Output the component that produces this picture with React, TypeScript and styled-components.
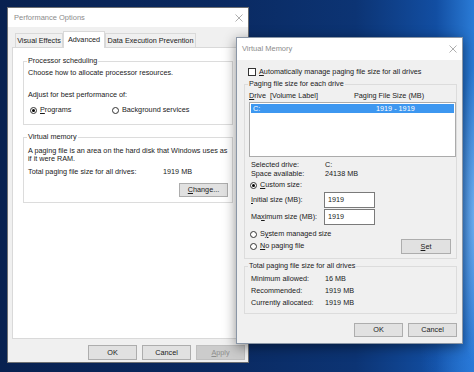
import styled, { createGlobalStyle } from 'styled-components';

const GlobalStyle = createGlobalStyle`
  html, body { margin: 0; padding: 0; }
  body {
    font-family: "Liberation Sans", Arial, sans-serif;
    font-size: 7.25px;
    line-height: 8px;
    color: #1a1a1a;
  }
`;

const Desktop = styled.div`
  position: relative;
  width: 474px;
  height: 372px;
  overflow: hidden;
  background:
    radial-gradient(ellipse 22px 150px at 476px 215px, rgba(140, 200, 255, 0.75), transparent),
    radial-gradient(ellipse 60px 200px at 480px 330px, rgba(40, 120, 220, 0.6), transparent),
    linear-gradient(90deg, #082150 0%, #0a2960 45%, #0c3474 75%, #124ea2 92%, #2a7bd6 100%);
`;

const Window = styled.div<{ $x: number; $y: number; $w: number; $h: number; $active?: boolean }>`
  position: absolute;
  left: ${p => p.$x}px;
  top: ${p => p.$y}px;
  width: ${p => p.$w}px;
  height: ${p => p.$h}px;
  box-sizing: border-box;
  border: 1px solid ${p => (p.$active ? '#8a96a6' : '#6d6f72')};
  background: #f0f0f0;
  display: flex;
  flex-direction: column;
  z-index: ${p => (p.$active ? 2 : 1)};
  box-shadow: ${p => (p.$active ? '0 3px 12px rgba(0, 0, 0, 0.45)' : 'none')};
`;

const TitleBar = styled.div<{ $h: number; $pad: number }>`
  flex: none;
  height: ${p => p.$h}px;
  background: #fff;
  display: flex;
  align-items: center;
  justify-content: space-between;
  padding: 0 5px 0 ${p => p.$pad}px;
  color: #8c8c8c;
  font-size: 7.5px;
`;

const CloseIcon = () => (
  <svg width="8" height="8" viewBox="0 0 8 8">
    <path d="M0.5 0.5 L7.5 7.5 M7.5 0.5 L0.5 7.5" stroke="#9a9a9a" strokeWidth="0.8" />
  </svg>
);

const TabStrip = styled.div`
  flex: none;
  height: 20px;
  display: flex;
  align-items: flex-end;
  padding-left: 7px;
`;

const Tab = styled.div<{ $w: number; $active?: boolean }>`
  position: relative;
  z-index: ${p => (p.$active ? 1 : 0)};
  width: ${p => p.$w}px;
  height: ${p => (p.$active ? 17 : 14)}px;
  margin-bottom: ${p => (p.$active ? -1 : 0)}px;
  box-sizing: border-box;
  border: 1px solid #d9d9d9;
  border-bottom: none;
  background: ${p => (p.$active ? '#fff' : '#f0f0f0')};
  display: flex;
  align-items: center;
  justify-content: center;
  white-space: nowrap;
`;

const Panel = styled.div`
  flex: none;
  height: 292px;
  box-sizing: border-box;
  margin: 0 5px 0 4px;
  padding: 9px 9px 0 10px;
  border: 1px solid #d9d9d9;
  background: #fff;
`;

const Group = styled.fieldset<{ $mt?: number; $pb?: number }>`
  margin: ${p => p.$mt ?? 0}px 0 0 0;
  padding: 0 0 ${p => p.$pb ?? 0}px 4px;
  border: 1px solid #dcdcdc;
  min-width: 0;
  display: flex;
  flex-direction: column;
`;

const Legend = styled.legend`
  padding: 0 1px;
  margin-left: -1px;
  line-height: 8px;
  white-space: nowrap;
`;

const Line = styled.div<{ $mt?: number; $indent?: number }>`
  margin-top: ${p => p.$mt ?? 0}px;
  padding-left: ${p => p.$indent ?? 0}px;
  height: 8px;
  white-space: pre;
`;

const PairGrid = styled.div<{ $col: number; $mt?: number; $gap?: number; $indent?: number }>`
  display: grid;
  grid-template-columns: ${p => p.$col}px auto;
  row-gap: ${p => p.$gap ?? 0}px;
  margin-top: ${p => p.$mt ?? 0}px;
  padding-left: ${p => p.$indent ?? 0}px;
  line-height: 8px;
  white-space: pre;
`;

const RadioRow = styled.div`
  display: grid;
  grid-template-columns: 82px auto;
  margin-top: 7px;
  padding-left: 2px;
`;

const RadioLabel = styled.label<{ $mt?: number; $ml?: number }>`
  display: inline-flex;
  align-items: center;
  gap: 3px;
  height: 8px;
  margin-top: ${p => p.$mt ?? 0}px;
  margin-left: ${p => p.$ml ?? 0}px;
  white-space: nowrap;
`;

const RadioDot = styled.span<{ $checked?: boolean }>`
  width: 7px;
  height: 7px;
  box-sizing: border-box;
  border: 1px solid #333;
  border-radius: 50%;
  background: #fff;
  display: flex;
  align-items: center;
  justify-content: center;
  &::after {
    content: '';
    width: 3px;
    height: 3px;
    border-radius: 50%;
    background: ${p => (p.$checked ? '#000' : 'transparent')};
  }
`;

const Radio = ({ checked, children, mt, ml }: { checked?: boolean; children: React.ReactNode; mt?: number; ml?: number }) => (
  <RadioLabel $mt={mt} $ml={ml}>
    <RadioDot $checked={checked} />
    <span>{children}</span>
  </RadioLabel>
);

const CheckRow = styled.label`
  display: flex;
  align-items: center;
  gap: 3px;
  height: 8px;
  margin: 8px 0 0 4px;
  white-space: nowrap;
`;

const CheckBox = styled.span`
  width: 8px;
  height: 8px;
  box-sizing: border-box;
  border: 1px solid #333;
  background: #fff;
`;

const Button = styled.button<{ $w: number; $h: number }>`
  width: ${p => p.$w}px;
  height: ${p => p.$h}px;
  box-sizing: border-box;
  padding: 0;
  font: inherit;
  line-height: 8px;
  color: #1a1a1a;
  background: #e1e1e1;
  border: 1px solid #adadad;
  border-radius: 0;
  &:disabled {
    color: #8e8e8e;
    background: #cccccc;
    border-color: #bfbfbf;
  }
`;

const ChangeRow = styled.div`
  display: flex;
  justify-content: flex-end;
  margin-top: 7px;
  padding-right: 4px;
`;

const Footer = styled.div<{ $mt: number; $gap: number; $pr: number }>`
  display: flex;
  justify-content: flex-end;
  gap: ${p => p.$gap}px;
  margin-top: ${p => p.$mt}px;
  padding-right: ${p => p.$pr}px;
`;

const VmBody = styled.div`
  flex: 1;
  display: flex;
  flex-direction: column;
  padding: 0 5px 0 7px;
`;

const ListBox = styled.div`
  margin-top: 2px;
  height: 55px;
  box-sizing: border-box;
  border: 1px solid #ababab;
  background: #fff;
  padding: 1px;
`;

const ListRow = styled.div<{ $selected?: boolean }>`
  display: grid;
  grid-template-columns: 123px auto;
  height: 9px;
  align-items: center;
  padding-left: 2px;
  background: ${p => (p.$selected ? '#3d97f0' : 'transparent')};
  color: ${p => (p.$selected ? '#fff' : '#000')};
`;

const SizeRow = styled.div<{ $mt: number }>`
  display: grid;
  grid-template-columns: 73px 51px;
  align-items: center;
  margin-top: ${p => p.$mt}px;
  padding-left: 2px;
  white-space: nowrap;
`;

const SizeInput = styled.div`
  height: 16px;
  box-sizing: border-box;
  border: 1px solid #7a7a7a;
  background: #fff;
  padding-left: 3px;
  display: flex;
  align-items: center;
`;

const BottomRow = styled.div`
  display: flex;
  justify-content: space-between;
  align-items: flex-start;
  margin-top: 5px;
  padding-right: 5px;
`;

const RadioStack = styled.div`
  display: flex;
  flex-direction: column;
  gap: 4px;
`;

const SetButton = styled(Button)`
  margin-top: 9px;
`;

export default function App() {
  return (
    <>
      <GlobalStyle />
      <Desktop>
        <Window $x={7} $y={7} $w={242} $h={356}>
          <TitleBar $h={19} $pad={6}>
            <span>Performance Options</span>
            <CloseIcon />
          </TitleBar>
          <TabStrip>
            <Tab $w={48}>Visual Effects</Tab>
            <Tab $w={42} $active>Advanced</Tab>
            <Tab $w={91}>Data Execution Prevention</Tab>
          </TabStrip>
          <Panel>
            <Group $pb={10}>
              <Legend>Processor scheduling</Legend>
              <Line $mt={4}>Choose how to allocate processor resources.</Line>
              <Line $mt={14}>Adjust for best performance of:</Line>
              <RadioRow>
                <Radio checked><u>P</u>rograms</Radio>
                <Radio>Background services</Radio>
              </RadioRow>
            </Group>
            <Group $mt={8} $pb={5}>
              <Legend>Virtual memory</Legend>
              <Line $mt={6}>A paging file is an area on the hard disk that Windows uses as</Line>
              <Line>if it were RAM.</Line>
              <PairGrid $col={135} $mt={5}>
                <span>Total paging file size for all drives:</span>
                <span>1919 MB</span>
              </PairGrid>
              <ChangeRow>
                <Button $w={49} $h={14}><u>C</u>hange...</Button>
              </ChangeRow>
            </Group>
          </Panel>
          <Footer $mt={6} $gap={5} $pr={3}>
            <Button $w={49} $h={15}>OK</Button>
            <Button $w={49} $h={15}>Cancel</Button>
            <Button $w={49} $h={15} disabled><u>A</u>pply</Button>
          </Footer>
        </Window>

        <Window $x={236} $y={37} $w={227} $h={307} $active>
          <TitleBar $h={22} $pad={5}>
            <span>Virtual Memory</span>
            <CloseIcon />
          </TitleBar>
          <VmBody>
            <CheckRow>
              <CheckBox />
              <span><u>A</u>utomatically manage paging file size for all drives</span>
            </CheckRow>
            <Group $mt={4} $pb={4}>
              <Legend>Paging file size for each drive</Legend>
              <PairGrid $col={105} $mt={4}>
                <span><u>D</u>rive  [Volume Label]</span>
                <span>Paging File Size (MB)</span>
              </PairGrid>
              <ListBox>
                <ListRow $selected>
                  <span>C:</span>
                  <span>1919 - 1919</span>
                </ListRow>
              </ListBox>
              <PairGrid $col={74} $mt={4} $gap={1} $indent={2}>
                <span>Selected drive:</span>
                <span>C:</span>
                <span>Space available:</span>
                <span>24138 MB</span>
              </PairGrid>
              <Radio checked mt={3} ml={1}><u>C</u>ustom size:</Radio>
              <SizeRow $mt={3}>
                <span><u>I</u>nitial size (MB):</span>
                <SizeInput>1919</SizeInput>
              </SizeRow>
              <SizeRow $mt={1}>
                <span>Ma<u>x</u>imum size (MB):</span>
                <SizeInput>1919</SizeInput>
              </SizeRow>
              <BottomRow>
                <RadioStack>
                  <Radio ml={1}>S<u>y</u>stem managed size</Radio>
                  <Radio ml={1}><u>N</u>o paging file</Radio>
                </RadioStack>
                <SetButton $w={50} $h={15}><u>S</u>et</SetButton>
              </BottomRow>
            </Group>
            <Group $mt={3} $pb={6}>
              <Legend>Total paging file size for all drives</Legend>
              <PairGrid $col={74} $mt={5} $gap={4} $indent={2}>
                <span>Minimum allowed:</span>
                <span>16 MB</span>
                <span>Recommended:</span>
                <span>1919 MB</span>
                <span>Currently allocated:</span>
                <span>1919 MB</span>
              </PairGrid>
            </Group>
            <Footer $mt={9} $gap={5} $pr={0}>
              <Button $w={49} $h={14}>OK</Button>
              <Button $w={49} $h={14}>Cancel</Button>
            </Footer>
          </VmBody>
        </Window>
      </Desktop>
    </>
  );
}
